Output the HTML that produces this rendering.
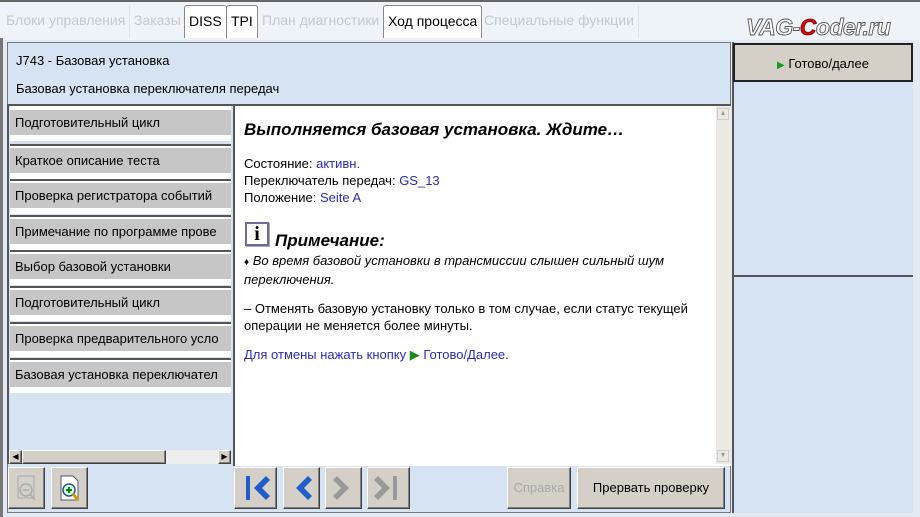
<!DOCTYPE html>
<html><head><meta charset="utf-8"><style>
*{margin:0;padding:0;box-sizing:border-box}
body{width:920px;height:517px;overflow:hidden;background:#e4eaf2;font-family:"Liberation Sans",Arial,sans-serif;font-size:13px;position:relative}
.a{position:absolute}
.tab{position:absolute;top:5px;height:33px;line-height:30px;font-size:14px;color:#c4c8cc;padding:0 4px;border-right:1px solid #dde3ea}
.tab.on{color:#000;background:#fff;border:1px solid #888;border-bottom:none;border-radius:3px 3px 0 0}
.item{position:absolute;left:10px;width:221px;height:35px;border-top:2px solid #555;background:#fff}
.item div{height:25px;background:#c6c6c6;line-height:25px;padding-left:5px;font-size:13px;white-space:nowrap;overflow:hidden;margin-top:2px}
.btn{position:absolute;background:#d4d0c8;border:1px solid #fff;border-right-color:#404040;border-bottom-color:#404040;box-shadow:inset -1px -1px 0 #808080}
.blue{color:#2a2ab8}
</style></head><body>
<div class="a" style="left:0;top:0;width:920px;height:40px;background:#eef3f9;border-top:2px solid #666"></div>
<div class="tab" style="left:2px">Блоки управления</div>
<div class="tab" style="left:130px">Заказы</div>
<div class="tab on" style="left:184px">DISS</div>
<div class="tab on" style="left:226px">TPI</div>
<div class="tab" style="left:258px">План диагностики</div>
<div class="tab on" style="left:383px">Ход процесса</div>
<div class="tab" style="left:480px">Специальные функции</div>
<div class="a" style="left:746px;top:14px;font-size:23px;font-style:italic;color:#fff;-webkit-text-stroke:0.9px #555;font-weight:bold;letter-spacing:-0.5px">VAG-<span style="color:#d41010;-webkit-text-stroke:0.8px #700">C</span>oder.ru</div>
<div class="a" style="left:0;top:38px;width:3px;height:479px;background:#777"></div>
<div class="a" style="left:7px;top:42px;width:724px;height:471px;background:#d6e3f2;border:1px solid #777"></div>
<div class="a" style="left:16px;top:53px;font-size:13px">J743 - Базовая установка</div>
<div class="a" style="left:16px;top:81px;font-size:13px">Базовая установка переключателя передач</div>
<div class="a" style="left:7px;top:104px;width:226px;height:360px;background:#d6e3f2;border-top:2px solid #555;border-left:2px solid #555"></div>
<div class="item" style="top:106px;border-top:none"><div style="margin-top:4px">Подготовительный цикл</div></div>
<div class="item" style="top:144px"><div>Краткое описание теста</div></div>
<div class="item" style="top:179px"><div>Проверка регистратора событий</div></div>
<div class="item" style="top:215px"><div>Примечание по программе прове</div></div>
<div class="item" style="top:250px"><div>Выбор базовой установки</div></div>
<div class="item" style="top:286px"><div>Подготовительный цикл</div></div>
<div class="item" style="top:322px"><div>Проверка предварительного усло</div></div>
<div class="item" style="top:358px"><div>Базовая установка переключател</div></div>
<div class="a" style="left:9px;top:450px;width:222px;height:14px;background:#eee"></div>
<div class="btn" style="left:9px;top:450px;width:13px;height:14px;font-size:8px;line-height:12px;text-align:center">◀</div>
<div class="btn" style="left:22px;top:450px;width:144px;height:14px"></div>
<div class="btn" style="left:218px;top:450px;width:13px;height:14px;font-size:8px;line-height:12px;text-align:center">▶</div>
<div class="a" style="left:233px;top:104px;width:498px;height:362px;background:#fff;border-top:2px solid #555;border-left:2px solid #555"></div>
<div class="a" style="left:716px;top:106px;width:15px;height:358px;background:#ece9e4"></div>
<div class="a" style="left:717px;top:108px;width:12px;height:12px;background:#ece9e4;border:1px solid #ccc;font-size:7px;color:#999;text-align:center;line-height:10px">▲</div>
<div class="a" style="left:717px;top:450px;width:12px;height:12px;background:#ece9e4;border:1px solid #ccc;font-size:7px;color:#999;text-align:center;line-height:10px">▼</div>
<div class="a" style="left:244px;top:120px;font-size:17px;font-weight:bold;font-style:italic">Выполняется базовая установка. Ждите…</div>
<div class="a" style="left:244px;top:155px;line-height:17px;font-size:13px">Состояние: <span class="blue">активн.</span><br>Переключатель передач: <span class="blue">GS_13</span><br>Положение: <span class="blue">Seite A</span></div>
<div class="a" style="left:245px;top:222px;width:24px;height:24px;border:2px solid #6a6aa0;background:#fff;box-shadow:1px 1px 0 #aaa;font-family:'Liberation Serif',serif;font-weight:bold;font-size:20px;text-align:center;line-height:20px">i</div>
<div class="a" style="left:275px;top:231px;font-size:17px;font-weight:bold;font-style:italic">Примечание:</div>
<div class="a" style="left:244px;top:252px;width:470px;font-size:13px;font-style:italic;line-height:17px"><span style="font-style:normal;font-size:10px">♦</span> Во время базовой установки в трансмиссии слышен сильный шум переключения.</div>
<div class="a" style="left:244px;top:300px;width:470px;font-size:13px;line-height:17px">– Отменять базовую установку только в том случае, если статус текущей операции не меняется более минуты.</div>
<div class="a blue" style="left:244px;top:347px;font-size:13px">Для отмены нажать кнопку <span style="color:#1a8a1a">▶</span> Готово/Далее.</div>
<div class="btn" style="left:8px;top:467px;width:37px;height:42px"><svg width="35" height="40"><rect x="9" y="8" width="16" height="22" fill="none" stroke="#aaa"/><circle cx="17" cy="22" r="6" fill="none" stroke="#aaa" stroke-width="1.5"/><path d="M14 22h6M21 26l5 6" stroke="#aaa" stroke-width="1.5"/></svg></div>
<div class="btn" style="left:51px;top:467px;width:37px;height:42px"><svg width="35" height="40"><path d="M9 8h12l5 5v19H9z" fill="#fff" stroke="#557"/><circle cx="17" cy="22" r="6" fill="#dfd" stroke="#258" stroke-width="1.5"/><path d="M14 22h6M17 19v6" stroke="#080" stroke-width="2"/><path d="M21 26l5 6" stroke="#d90" stroke-width="3"/></svg></div>
<div class="btn" style="left:234px;top:467px;width:43px;height:42px"><svg width="41" height="40"><rect x="11" y="8" width="4" height="24" fill="#1e5cc8"/><path d="M31 8 L19 20 L31 32 L35 28 L27 20 L35 12Z" fill="#1e5cc8"/></svg></div>
<div class="btn" style="left:283px;top:467px;width:37px;height:42px"><svg width="35" height="40"><path d="M24 8 L12 20 L24 32 L28 28 L20 20 L28 12Z" fill="#1e5cc8"/></svg></div>
<div class="btn" style="left:325px;top:467px;width:37px;height:42px"><svg width="35" height="40"><path d="M11 8 L23 20 L11 32 L7 28 L15 20 L7 12Z" fill="#999"/></svg></div>
<div class="btn" style="left:367px;top:467px;width:43px;height:42px"><svg width="41" height="40"><path d="M10 8 L22 20 L10 32 L6 28 L14 20 L6 12Z" fill="#999"/><rect x="25" y="8" width="4" height="24" fill="#999"/></svg></div>
<div class="btn" style="left:507px;top:467px;width:64px;height:42px;line-height:40px;text-align:center;color:#aaa">Справка</div>
<div class="btn" style="left:577px;top:467px;width:148px;height:42px;line-height:40px;text-align:center">Прервать проверку</div>
<div class="a" style="left:732px;top:42px;width:181px;height:471px;background:#d6e3f2;border-left:2px solid #555"></div>
<div class="a" style="left:733px;top:43px;width:180px;height:39px;background:#d4d0c8;border:2px solid #222;line-height:37px;text-align:center;font-size:13px"><span style="color:#1a9a1a;font-size:10px">▶</span> Готово/далее</div>
<div class="a" style="left:733px;top:275px;width:180px;height:2px;background:#555"></div>
</body></html>
